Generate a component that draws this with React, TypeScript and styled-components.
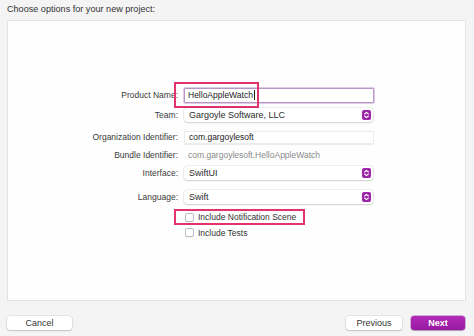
import React from "react";
import styled, { createGlobalStyle } from "styled-components";

const GlobalStyle = createGlobalStyle`
  html, body { margin: 0; padding: 0; }
  body {
    background: #f4f4f4;
    font-family: "Liberation Sans", Arial, Helvetica, sans-serif;
    color: #2e2e2e;
  }
`;

const Window = styled.div`
  width: 474px;
  height: 336px;
  display: flex;
  flex-direction: column;
  background: #f4f4f4;
`;

const Title = styled.div`
  height: 20px;
  padding-left: 7px;
  font-size: 9.1px;
  line-height: 18px;
  color: #333;
`;

const Panel = styled.div`
  margin: 0 8px 0 7px;
  height: 281px;
  box-sizing: border-box;
  background: #fefefe;
  border: 1px solid #e4e4e4;
  padding-top: 64px;
`;

const Form = styled.div`
  display: grid;
  grid-template-columns: 170px 190px;
  grid-template-rows: 20px 20px 24px 12px 24px 24px 16px 15px;
  column-gap: 6px;
`;

const Label = styled.div`
  justify-self: end;
  align-self: center;
  font-size: 8.5px;
  color: #3a3a3a;
  white-space: nowrap;
`;

const Control = styled.div`
  position: relative;
  align-self: center;
  display: flex;
  align-items: center;
`;

const Highlight = styled.div<{ $top: number; $left: number; $w: number; $h: number }>`
  position: absolute;
  top: ${(p) => p.$top}px;
  left: ${(p) => p.$left}px;
  width: ${(p) => p.$w}px;
  height: ${(p) => p.$h}px;
  box-sizing: border-box;
  border: 2px solid #e2336d;
  pointer-events: none;
`;

const TextField = styled.div<{ $focused?: boolean }>`
  width: 190px;
  height: ${(p) => (p.$focused ? 15 : 13)}px;
  box-sizing: border-box;
  display: flex;
  align-items: center;
  padding-left: ${(p) => (p.$focused ? 3 : 4)}px;
  font-size: 8.5px;
  color: #222;
  background: #fff;
  border: ${(p) => (p.$focused ? "1.5px solid #b795c4" : "1px solid #ececec")};
  box-shadow: ${(p) =>
    p.$focused ? "0 0 0 1px rgba(196,160,210,0.55)" : "0 0.5px 1px rgba(0,0,0,0.08)"};
  border-radius: 1px;
`;

const Caret = styled.span`
  display: inline-block;
  width: 1px;
  height: 10px;
  background: #222;
  margin-left: 1px;
`;

const StaticValue = styled.div`
  padding-left: 4px;
  font-size: 8.5px;
  color: #8a8a8a;
  white-space: nowrap;
`;

const Popup = styled.div`
  width: 189px;
  height: 14px;
  box-sizing: border-box;
  display: flex;
  align-items: center;
  justify-content: space-between;
  padding: 0 2px 0 5px;
  font-size: 9px;
  color: #2a2a2a;
  background: #fff;
  border-radius: 3px;
  box-shadow: 0 0 0 0.5px rgba(0, 0, 0, 0.12), 0 1px 1.5px rgba(0, 0, 0, 0.12);
`;

const CheckRow = styled.div`
  display: flex;
  align-items: center;
  gap: 4px;
  height: 10px;
  padding-left: 1px;
  font-size: 8.5px;
  color: #333;
  white-space: nowrap;
`;

const Box = styled.span`
  width: 9px;
  height: 9px;
  box-sizing: border-box;
  border: 1px solid #bdbdbd;
  border-radius: 2px;
  background: #fff;
  box-shadow: 0 0.5px 0.5px rgba(0, 0, 0, 0.08);
`;

const Footer = styled.div`
  display: flex;
  justify-content: space-between;
  align-items: center;
  padding: 15px 9px 0 7px;
`;

const Group = styled.div`
  display: flex;
  gap: 9px;
`;

const Button = styled.button<{ $w: number; $primary?: boolean }>`
  width: ${(p) => p.$w}px;
  height: 14px;
  padding: 0;
  border: none;
  border-radius: 3px;
  font-family: "Liberation Sans", Arial, sans-serif;
  font-size: 9px;
  font-weight: ${(p) => (p.$primary ? 700 : 400)};
  color: ${(p) => (p.$primary ? "#fff" : "#333")};
  background: ${(p) => (p.$primary ? "linear-gradient(#b52ab9, #951b9f)" : "#fff")};
  box-shadow: ${(p) =>
    p.$primary
      ? "0 0 0 0.5px rgba(120,20,130,0.6), 0 1px 1px rgba(0,0,0,0.15)"
      : "0 0 0 0.5px rgba(0,0,0,0.12), 0 1px 1.5px rgba(0,0,0,0.15)"};
`;

const Stepper = () => (
  <svg width="9" height="10" viewBox="0 0 9 10">
    <rect x="0" y="0" width="9" height="10" rx="2" fill="#9a25a6" />
    <path d="M2.6 4 L4.5 2.3 L6.4 4" stroke="#fff" strokeWidth="1.1" fill="none" strokeLinecap="round" strokeLinejoin="round" />
    <path d="M2.6 6 L4.5 7.7 L6.4 6" stroke="#fff" strokeWidth="1.1" fill="none" strokeLinecap="round" strokeLinejoin="round" />
  </svg>
);

export default function App() {
  return (
    <>
      <GlobalStyle />
      <Window>
        <Title>Choose options for your new project:</Title>
        <Panel>
          <Form>
            <Label>Product Name:</Label>
            <Control>
              <TextField $focused>
                HelloAppleWatch
                <Caret />
              </TextField>
              <Highlight $top={-6} $left={-10} $w={85} $h={26} />
            </Control>

            <Label>Team:</Label>
            <Control>
              <Popup>
                Gargoyle Software, LLC
                <Stepper />
              </Popup>
            </Control>

            <Label>Organization Identifier:</Label>
            <Control>
              <TextField>com.gargoylesoft</TextField>
            </Control>

            <Label>Bundle Identifier:</Label>
            <Control>
              <StaticValue>com.gargoylesoft.HelloAppleWatch</StaticValue>
            </Control>

            <Label>Interface:</Label>
            <Control>
              <Popup>
                SwiftUI
                <Stepper />
              </Popup>
            </Control>

            <Label>Language:</Label>
            <Control>
              <Popup>
                Swift
                <Stepper />
              </Popup>
            </Control>

            <span />
            <Control>
              <CheckRow>
                <Box />
                Include Notification Scene
              </CheckRow>
              <Highlight $top={-3} $left={-10} $w={131} $h={16} />
            </Control>

            <span />
            <Control>
              <CheckRow>
                <Box />
                Include Tests
              </CheckRow>
            </Control>
          </Form>
        </Panel>
        <Footer>
          <Button $w={65}>Cancel</Button>
          <Group>
            <Button $w={56}>Previous</Button>
            <Button $w={54} $primary>
              Next
            </Button>
          </Group>
        </Footer>
      </Window>
    </>
  );
}
